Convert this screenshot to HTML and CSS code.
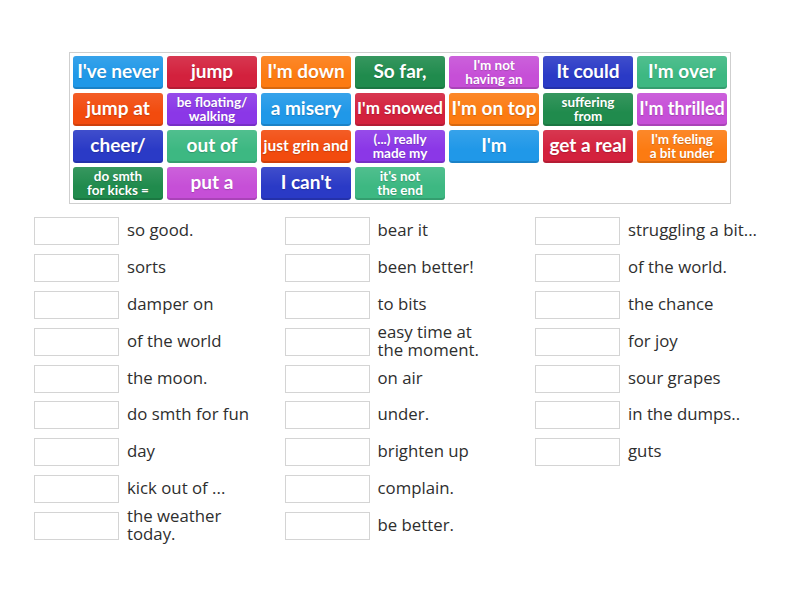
FILE: index.html
```html
<!DOCTYPE html>
<html>
<head>
<meta charset="utf-8">
<link rel="stylesheet" href="styles.css">
</head>
<body>
<div class="tiles">
  <div class="tile blue lg">I've never</div>
  <div class="tile crimson lg">jump</div>
  <div class="tile orange lg">I'm down</div>
  <div class="tile green lg">So far,</div>
  <div class="tile magenta two">I'm not<br>having an</div>
  <div class="tile royal lg">It could</div>
  <div class="tile mint lg">I'm over</div>

  <div class="tile redorange lg">jump at</div>
  <div class="tile purple two">be floating/<br>walking</div>
  <div class="tile blue lg">a misery</div>
  <div class="tile crimson md">I'm snowed</div>
  <div class="tile orange lg">I'm on top</div>
  <div class="tile green two">suffering<br>from</div>
  <div class="tile magenta md2">I'm thrilled</div>

  <div class="tile royal lg">cheer/</div>
  <div class="tile mint lg">out of</div>
  <div class="tile redorange sm">just grin and</div>
  <div class="tile purple two">(...) really<br>made my</div>
  <div class="tile blue lg">I'm</div>
  <div class="tile crimson lg">get a real</div>
  <div class="tile orange two">I'm feeling<br>a bit under</div>

  <div class="tile green two">do smth<br>for kicks =</div>
  <div class="tile magenta lg">put a</div>
  <div class="tile royal lg">I can't</div>
  <div class="tile mint two">it's not<br>the end</div>
</div>

<div class="answers">
  <div class="col">
    <div class="row"><span class="box"></span><span class="txt">so good.</span></div>
    <div class="row"><span class="box"></span><span class="txt">sorts</span></div>
    <div class="row"><span class="box"></span><span class="txt">damper on</span></div>
    <div class="row"><span class="box"></span><span class="txt">of the world</span></div>
    <div class="row"><span class="box"></span><span class="txt">the moon.</span></div>
    <div class="row"><span class="box"></span><span class="txt">do smth for fun</span></div>
    <div class="row"><span class="box"></span><span class="txt">day</span></div>
    <div class="row"><span class="box"></span><span class="txt">kick out of ...</span></div>
    <div class="row"><span class="box"></span><span class="txt">the weather<br>today.</span></div>
  </div>
  <div class="col">
    <div class="row"><span class="box"></span><span class="txt">bear it</span></div>
    <div class="row"><span class="box"></span><span class="txt">been better!</span></div>
    <div class="row"><span class="box"></span><span class="txt">to bits</span></div>
    <div class="row"><span class="box"></span><span class="txt">easy time at<br>the moment.</span></div>
    <div class="row"><span class="box"></span><span class="txt">on air</span></div>
    <div class="row"><span class="box"></span><span class="txt">under.</span></div>
    <div class="row"><span class="box"></span><span class="txt">brighten up</span></div>
    <div class="row"><span class="box"></span><span class="txt">complain.</span></div>
    <div class="row"><span class="box"></span><span class="txt">be better.</span></div>
  </div>
  <div class="col">
    <div class="row"><span class="box"></span><span class="txt">struggling a bit...</span></div>
    <div class="row"><span class="box"></span><span class="txt">of the world.</span></div>
    <div class="row"><span class="box"></span><span class="txt">the chance</span></div>
    <div class="row"><span class="box"></span><span class="txt">for joy</span></div>
    <div class="row"><span class="box"></span><span class="txt">sour grapes</span></div>
    <div class="row"><span class="box"></span><span class="txt">in the dumps..</span></div>
    <div class="row"><span class="box"></span><span class="txt">guts</span></div>
  </div>
</div>
</body>
</html>
```

FILE: styles.css
```css
html, body {
  margin: 0;
  padding: 0;
  background: #ffffff;
}

body {
  padding-top: 52px;
  font-family: "Open Sans", "Liberation Sans", sans-serif;
}

.tiles {
  box-sizing: border-box;
  width: 662px;
  margin: 0 auto;
  padding: 3px;
  border: 1px solid #cfcfcf;
  display: grid;
  grid-template-columns: repeat(7, 90px);
  grid-auto-rows: 33px;
  gap: 4px;
}

.tile {
  box-sizing: border-box;
  display: flex;
  align-items: center;
  justify-content: center;
  text-align: center;
  color: #ffffff;
  font-family: "Lato", "Open Sans", sans-serif;
  font-weight: 700;
  border-radius: 3px;
  white-space: nowrap;
  overflow: hidden;
  padding-bottom: 2px;
  box-shadow: inset 0 -2px 0 rgba(0, 0, 0, 0.14);
  text-shadow: 0 1px 1px rgba(0, 0, 0, 0.18);
  background-image: linear-gradient(to bottom, rgba(255, 255, 255, 0.10), rgba(255, 255, 255, 0) 60%);
}

.lg { font-size: 19px; padding-bottom: 4px; }
.md { font-size: 17px; padding-bottom: 4px; }
.md2 { font-size: 18px; padding-bottom: 4px; }
.sm { font-size: 15.5px; padding-bottom: 3px; }
.two { font-size: 13.5px; line-height: 14px; }

.blue { background-color: #2098e8; }
.crimson { background-color: #d3213d; }
.orange { background-color: #fc7b12; }
.green { background-color: #208b4d; }
.magenta { background-color: #c64fd7; }
.royal { background-color: #2a3ac6; }
.mint { background-color: #3db882; }
.redorange { background-color: #f24b0e; }
.purple { background-color: #8b37e7; }

.answers {
  display: grid;
  grid-template-columns: repeat(3, 250.5px);
  padding-left: 34px;
  margin-top: 9px;
}

.row {
  display: flex;
  align-items: center;
  height: 36.8px;
}

.box {
  box-sizing: border-box;
  flex: none;
  width: 85px;
  height: 28px;
  border: 1px solid #d4d4d4;
  margin-right: 8px;
}

.txt {
  font-size: 16.8px;
  line-height: 18px;
  color: #2e2e2e;
  padding-bottom: 2px;
}
```
